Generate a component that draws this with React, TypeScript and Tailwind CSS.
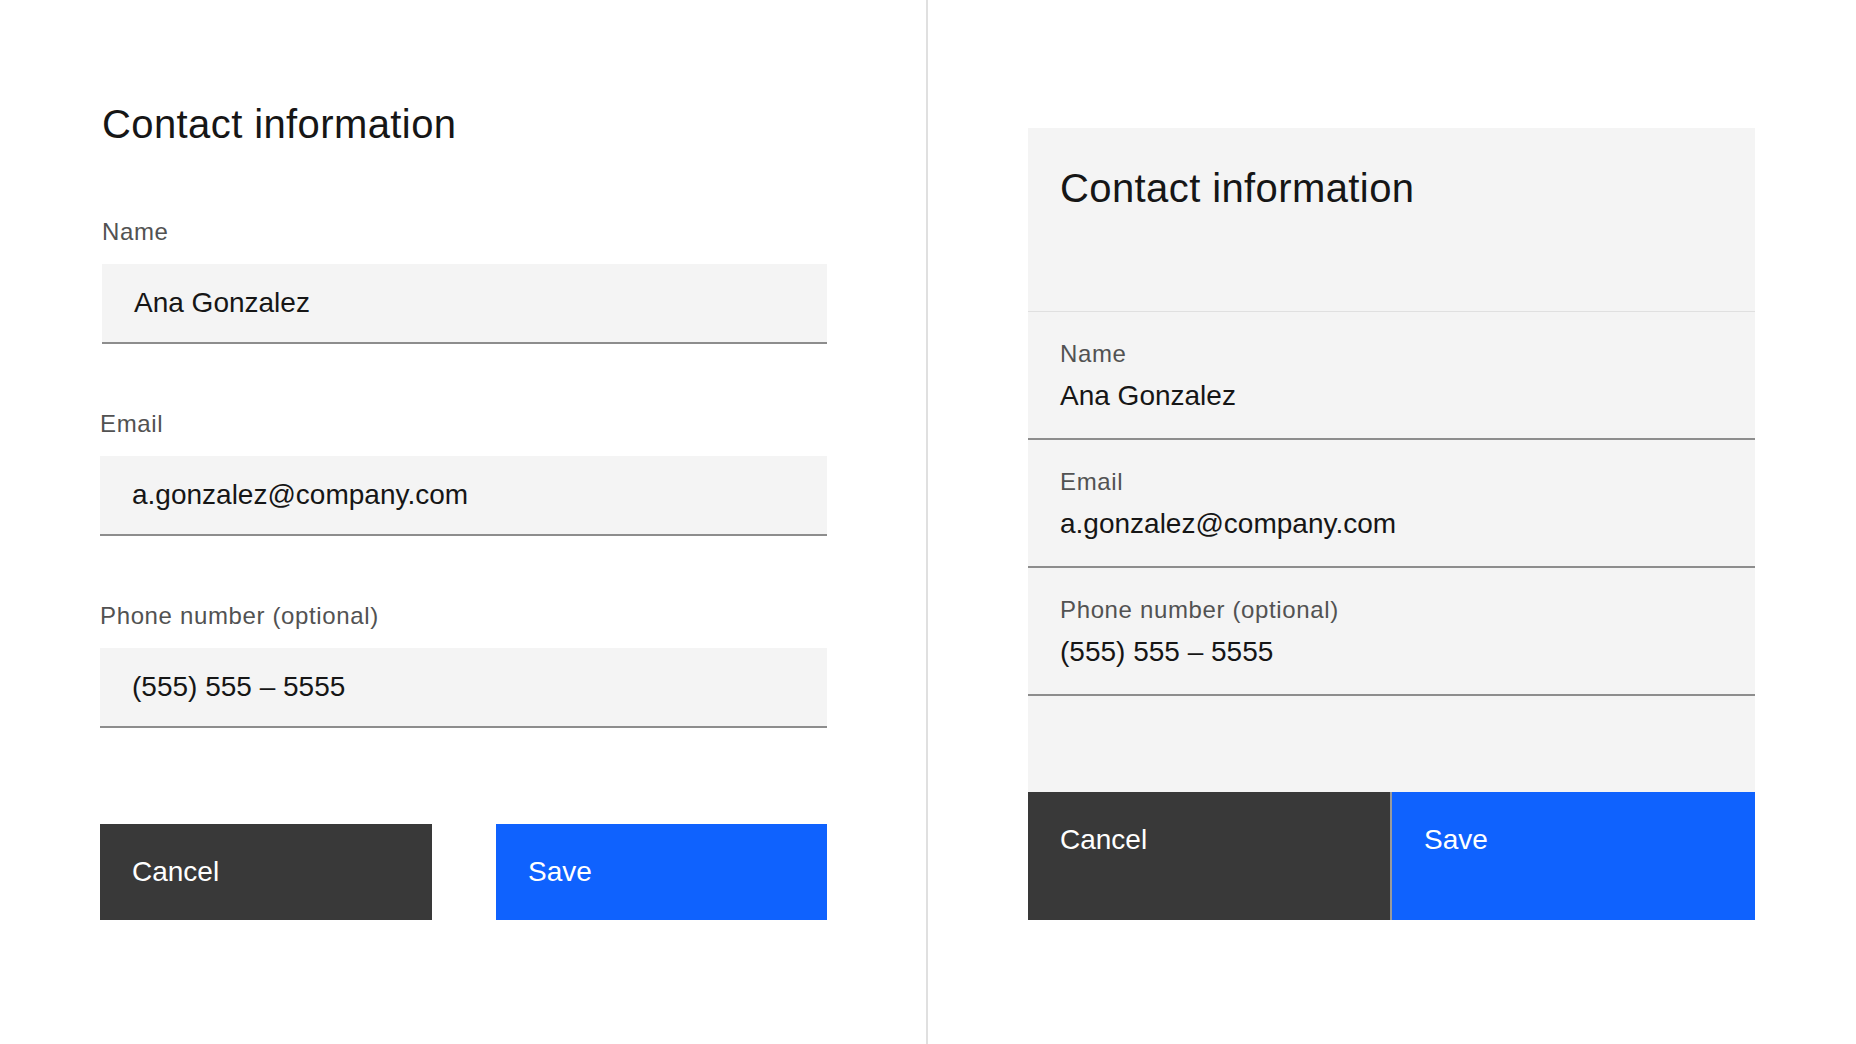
const FIELDS = [
  { id: 'name', label: 'Name', value: 'Ana Gonzalez' },
  { id: 'email', label: 'Email', value: 'a.gonzalez@company.com' },
  { id: 'phone', label: 'Phone number (optional)', value: '(555) 555 – 5555' },
]

const font = { fontFamily: '"Liberation Sans", Arial, sans-serif' }

export default function App() {
  return (
    <div className="flex h-[1044px] w-[1856px] bg-white" style={font}>
      {/* Left: stacked form */}
      <div className="w-[926px] shrink-0 pl-[100px] pt-[96px]">
        <div className="flex w-[727px] flex-col">
          <h2 className="ml-[2px] text-[40px] font-normal leading-[56px] tracking-[0.4px] text-[#161616]">
            Contact information
          </h2>

          {FIELDS.map((field, i) => (
            <div key={field.id} className={i === 0 ? 'ml-[2px] mt-[64px]' : 'mt-[64px]'}>
              <label className="block text-[24px] leading-[32px] tracking-[0.64px] text-[#525252]">
                {field.label}
              </label>
              <div className="mt-[16px] flex h-[80px] items-center border-b-2 border-[#8d8d8d] bg-[#f4f4f4] px-[32px] text-[28px] text-[#161616]">
                {field.value}
              </div>
            </div>
          ))}

          <div className="mt-[96px] flex gap-[64px]">
            <button className="flex h-[96px] w-[332px] items-start bg-[#393939] pl-[32px] pt-[30px] text-left text-[28px] leading-[36px] text-white">
              Cancel
            </button>
            <button className="flex h-[96px] w-[331px] items-start bg-[#0f62fe] pl-[32px] pt-[30px] text-left text-[28px] leading-[36px] text-white">
              Save
            </button>
          </div>
        </div>
      </div>

      {/* Divider */}
      <div className="w-[2px] shrink-0 bg-[#e0e0e0]" />

      {/* Right: tile form */}
      <div className="flex-1 pl-[100px] pt-[128px]">
        <div className="flex w-[727px] flex-col bg-[#f4f4f4]">
          <div className="h-[184px] border-b border-[#e0e0e0] px-[32px] pt-[32px]">
            <h2 className="text-[40px] font-normal leading-[56px] tracking-[0.4px] text-[#161616]">
              Contact information
            </h2>
          </div>

          {FIELDS.map((field) => (
            <div key={field.id} className="border-b-2 border-[#8d8d8d] px-[32px] pb-[24px] pt-[26px]">
              <div className="text-[24px] leading-[32px] tracking-[0.64px] text-[#525252]">{field.label}</div>
              <div className="mt-[8px] text-[28px] leading-[36px] text-[#161616]">{field.value}</div>
            </div>
          ))}

          <div className="h-[96px]" />

          <div className="flex h-[128px]">
            <button className="flex h-full w-[364px] items-start border-r-2 border-[#9a9a9a] bg-[#393939] pl-[32px] pt-[30px] text-left text-[28px] leading-[36px] text-white">
              Cancel
            </button>
            <button className="flex h-full flex-1 items-start bg-[#0f62fe] pl-[32px] pt-[30px] text-left text-[28px] leading-[36px] text-white">
              Save
            </button>
          </div>
        </div>
      </div>
    </div>
  )
}
